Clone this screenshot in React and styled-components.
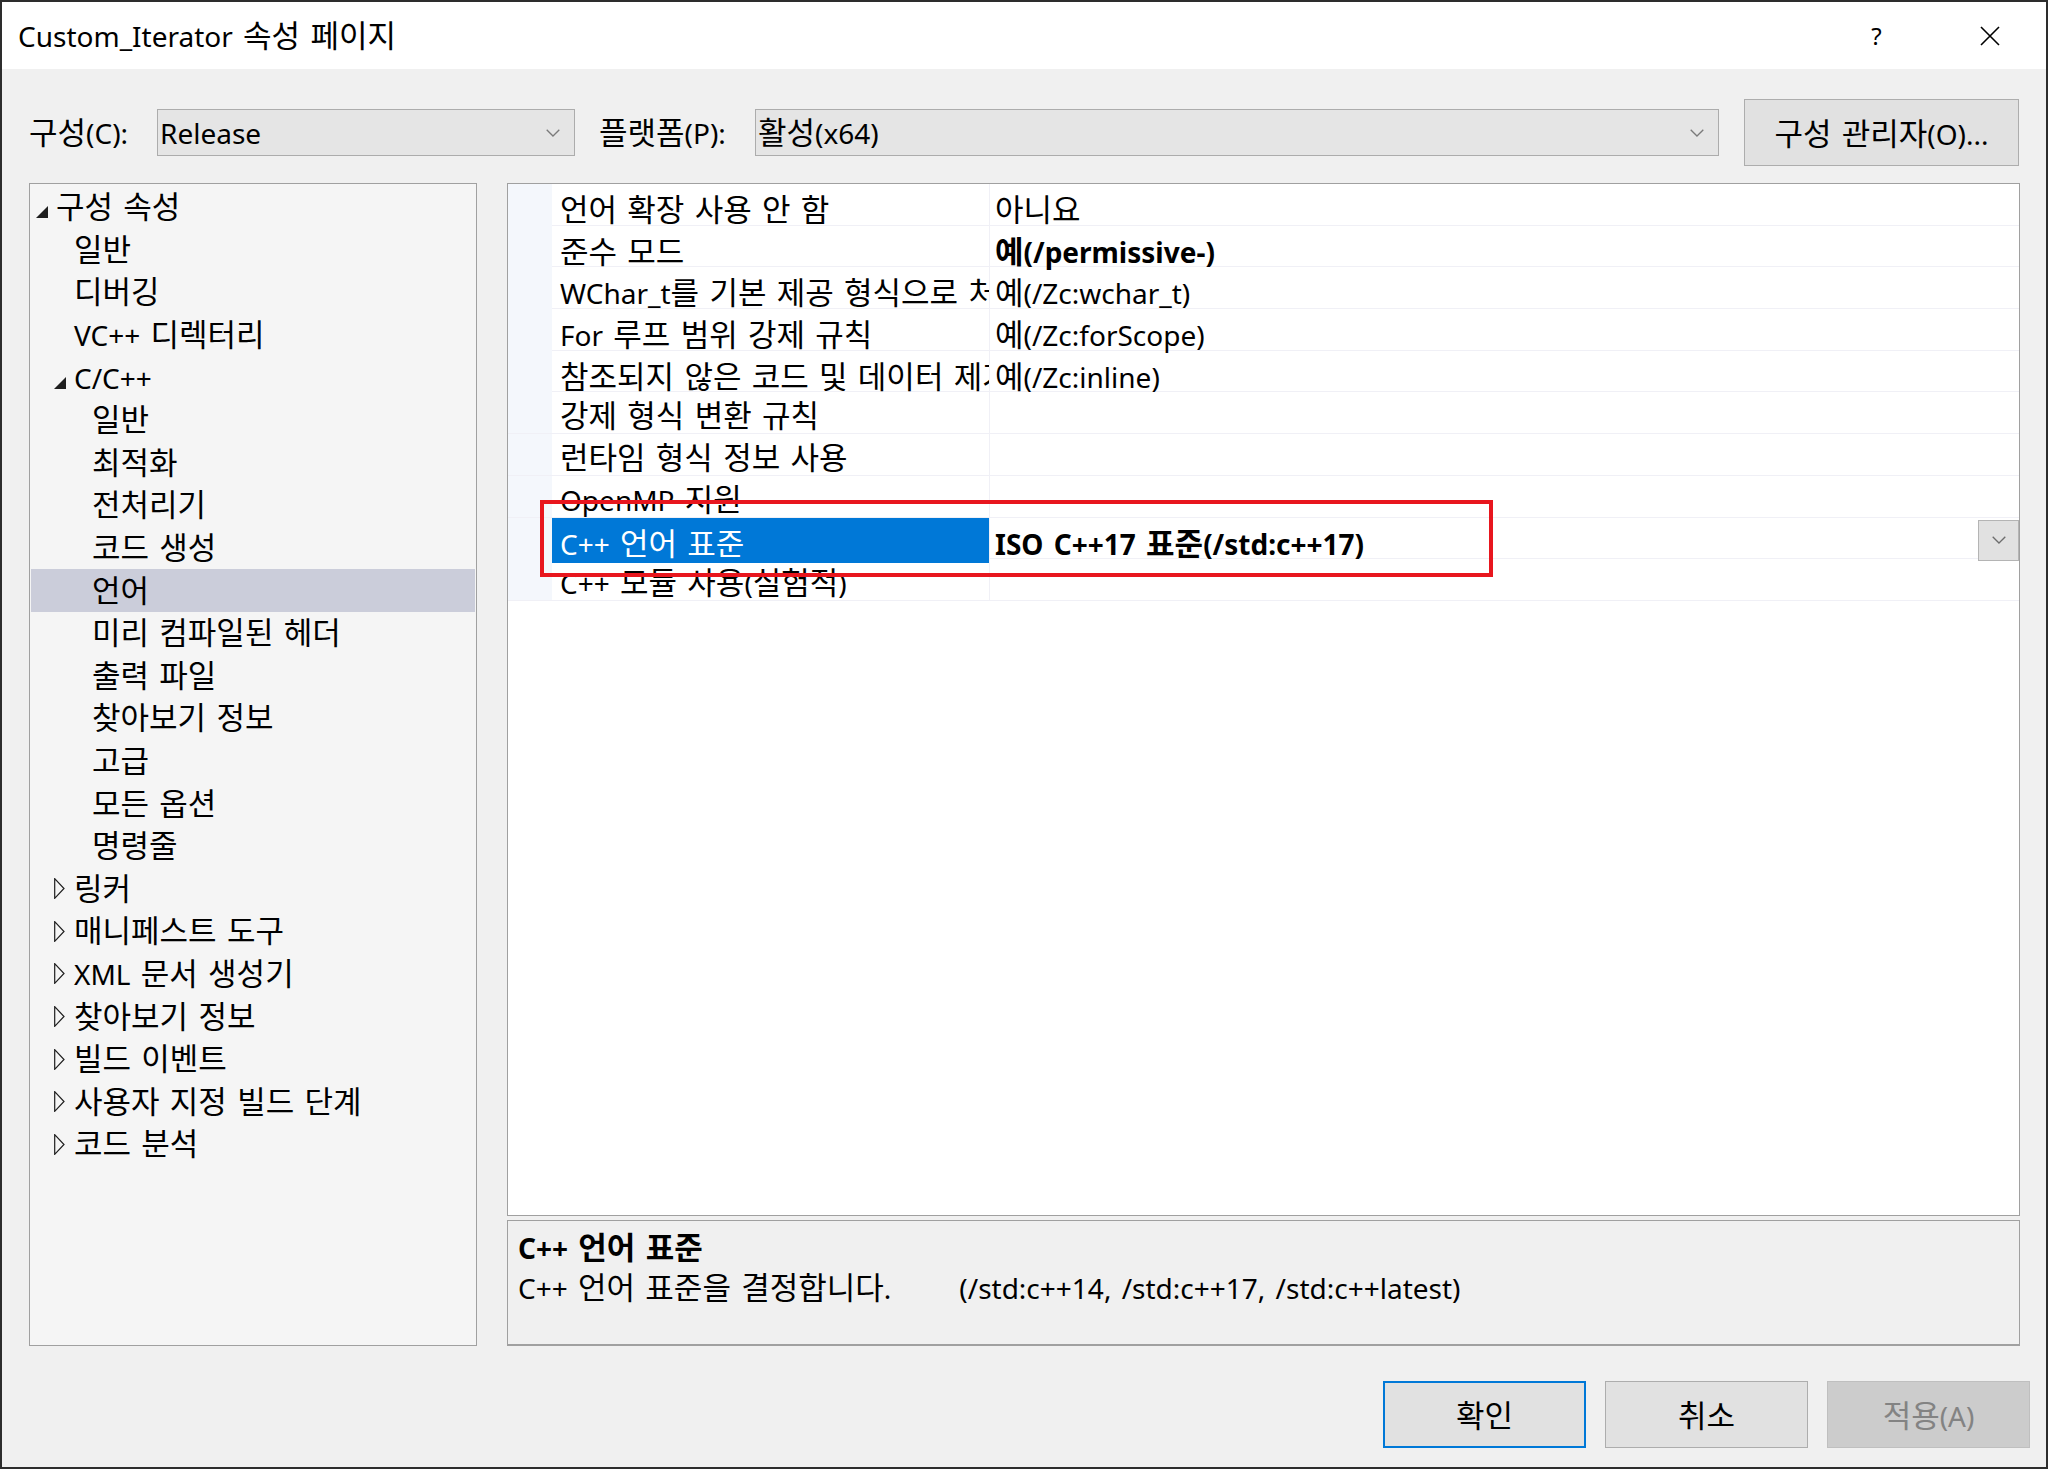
import React from "react";
import styled, { createGlobalStyle, css } from "styled-components";

const GlobalStyle = createGlobalStyle`
  html, body {
    margin: 0;
    padding: 0;
    background: #2d2d2d;
  }
  * {
    box-sizing: border-box;
  }
`;

const Window = styled.div`
  width: 2048px;
  height: 1469px;
  border: 2px solid #2d2d2d;
  background: #f0f0f0;
  display: flex;
  flex-direction: column;
  font-family: "Noto Sans", "Noto Sans CJK KR", sans-serif;
  font-size: 28px;
  word-spacing: 3px;
  color: #000;
  overflow: hidden;
`;

// Hangul runs are drawn a bit larger so they keep the width of the original font;
// line-height 0 keeps them from pushing the line box down
const Hangul = styled.span`
  font-size: 31px;
  line-height: 0;
`;

const HANGUL_RUN = /([\u1100-\u11ff\u3131-\u318e\uac00-\ud7a3]+)/;

const T = ({ children }) => (
  <span>
    {String(children)
      .split(HANGUL_RUN)
      .map((part, i) => (i % 2 === 1 ? <Hangul key={i}>{part}</Hangul> : part))}
  </span>
);

const TitleBar = styled.div`
  height: 67px;
  background: #fff;
  display: flex;
  align-items: center;
  padding-left: 16px;
`;

const Title = styled.div`
  flex: 1;
  white-space: nowrap;
`;

const CaptionButton = styled.div`
  width: 113px;
  height: 67px;
  display: flex;
  align-items: center;
  justify-content: center;
  font-size: 24px;
`;

const Toolbar = styled.div`
  display: flex;
  align-items: center;
  height: 67px;
  margin: 30px 27px 0 27px;
`;

const Label = styled.div`
  width: ${(p) => p.$w}px;
  margin-left: ${(p) => p.$ml || 0}px;
  white-space: nowrap;
`;

const Combo = styled.div`
  height: 47px;
  width: ${(p) => (p.$w ? `${p.$w}px` : "auto")};
  flex: ${(p) => (p.$w ? "none" : "1")};
  background: #e5e5e5;
  border: 1px solid #acacac;
  display: flex;
  align-items: center;
  padding: 0 14px 0 2px;
`;

const ComboText = styled.span`
  flex: 1;
`;

const Button = styled.div`
  width: ${(p) => p.$w}px;
  height: 67px;
  padding-top: 3px;
  background: ${(p) => (p.$disabled ? "#cccccc" : "#e1e1e1")};
  border: ${(p) => (p.$primary ? "2px solid #0078d7" : `1px solid ${p.$disabled ? "#bfbfbf" : "#adadad"}`)};
  color: ${(p) => (p.$disabled ? "#838383" : "#000")};
  display: flex;
  align-items: center;
  justify-content: center;
  margin-left: ${(p) => p.$ml || 0}px;
  white-space: nowrap;
`;

const Body = styled.div`
  display: flex;
  gap: 30px;
  height: 1163px;
  margin: 17px 26px 0 27px;
`;

const Tree = styled.div`
  width: 448px;
  background: #f5f5f5;
  border: 1px solid #a0a0a0;
  padding-top: 2px;
`;

const TreeRow = styled.div`
  height: 42.6px;
  display: flex;
  align-items: center;
  padding-left: ${(p) => 6 + p.$level * 18}px;
  white-space: nowrap;
  ${(p) =>
    p.$selected &&
    css`
      background: #cbcdda;
      margin: 0 1px;
      padding-left: ${5 + p.$level * 18}px;
    `}
`;

const Expander = styled.span`
  width: 20px;
  height: 42px;
  display: flex;
  align-items: ${(p) => (p.$open ? "flex-end" : "center")};
  padding-bottom: ${(p) => (p.$open ? 10 : 0)}px;
  flex: none;
`;

const RightColumn = styled.div`
  flex: 1;
  display: flex;
  flex-direction: column;
  gap: 4px;
`;

const Grid = styled.div`
  position: relative;
  flex: 1;
  background: #fff;
  border: 1px solid #a0a0a0;
`;

const GridRow = styled.div`
  display: grid;
  grid-template-columns: 44px 438px 1fr;
  height: 41.7px;
  border-bottom: 1px solid #f0f0f6;
`;

const Gutter = styled.div`
  background: #f4f7fc;
`;

const NameCell = styled.div`
  padding: 7px 0 0 8px;
  display: flex;
  align-items: center;
  overflow: hidden;
  white-space: nowrap;
  border-right: 1px solid #f0f0f6;
  ${(p) =>
    p.$selected &&
    css`
      background: #0078d7;
      color: #fff;
    `}
`;

const ValueCell = styled.div`
  padding: 7px 0 0 5px;
  display: flex;
  align-items: center;
  white-space: nowrap;
  font-weight: ${(p) => (p.$bold ? 700 : 400)};
`;

const DropButton = styled.div`
  margin: -7px 0 0 auto;
  width: 41px;
  height: 41px;
  background: #e1e1e1;
  border: 1px solid #b4b4b4;
  display: flex;
  align-items: center;
  justify-content: center;
`;

const RedMark = styled.div`
  position: absolute;
  left: 32px;
  top: 316px;
  width: 953px;
  height: 77px;
  border: 4px solid #e8161e;
  pointer-events: none;
`;

const Description = styled.div`
  height: 126px;
  background: #f0f0f0;
  border: 1px solid #a0a0a0;
  border-bottom: 2px solid #a0a0a0;
  padding: 7px 10px;
  line-height: 40px;
`;

const DescTitle = styled.div`
  font-weight: 700;
`;

const DescText = styled.div`
  white-space: nowrap;
`;

const DescFlags = styled.span`
  margin-left: 68px;
`;

const Footer = styled.div`
  display: flex;
  justify-content: flex-end;
  gap: 19px;
  margin: 35px 16px 0 0;
`;

const Chevron = ({ color = "#7a7a7a" }) => (
  <svg width="14" height="8" viewBox="0 0 14 8">
    <path d="M0.7 0.7 L7 7 L13.3 0.7" fill="none" stroke={color} strokeWidth="1.3" />
  </svg>
);

const OpenTriangle = () => (
  <svg width="12" height="12" viewBox="0 0 12 12">
    <path d="M12 0 L12 12 L0 12 Z" fill="#1e1e1e" />
  </svg>
);

const ClosedTriangle = () => (
  <svg width="11" height="21" viewBox="0 0 11 21">
    <path d="M0.7 0.7 L10 10.5 L0.7 20.3 Z" fill="none" stroke="#1e1e1e" strokeWidth="1.2" />
  </svg>
);

const CloseIcon = () => (
  <svg width="20" height="20" viewBox="0 0 20 20">
    <path d="M1 1 L19 19 M19 1 L1 19" stroke="#000" strokeWidth="1.6" />
  </svg>
);

const treeItems = [
  { label: "구성 속성", level: 0, node: "open" },
  { label: "일반", level: 1 },
  { label: "디버깅", level: 1 },
  { label: "VC++ 디렉터리", level: 1 },
  { label: "C/C++", level: 1, node: "open" },
  { label: "일반", level: 2 },
  { label: "최적화", level: 2 },
  { label: "전처리기", level: 2 },
  { label: "코드 생성", level: 2 },
  { label: "언어", level: 2, selected: true },
  { label: "미리 컴파일된 헤더", level: 2 },
  { label: "출력 파일", level: 2 },
  { label: "찾아보기 정보", level: 2 },
  { label: "고급", level: 2 },
  { label: "모든 옵션", level: 2 },
  { label: "명령줄", level: 2 },
  { label: "링커", level: 1, node: "closed" },
  { label: "매니페스트 도구", level: 1, node: "closed" },
  { label: "XML 문서 생성기", level: 1, node: "closed" },
  { label: "찾아보기 정보", level: 1, node: "closed" },
  { label: "빌드 이벤트", level: 1, node: "closed" },
  { label: "사용자 지정 빌드 단계", level: 1, node: "closed" },
  { label: "코드 분석", level: 1, node: "closed" },
];

const properties = [
  { name: "언어 확장 사용 안 함", value: "아니요" },
  { name: "준수 모드", value: "예(/permissive-)", bold: true },
  { name: "WChar_t를 기본 제공 형식으로 처리", value: "예(/Zc:wchar_t)" },
  { name: "For 루프 범위 강제 규칙", value: "예(/Zc:forScope)" },
  { name: "참조되지 않은 코드 및 데이터 제거", value: "예(/Zc:inline)" },
  { name: "강제 형식 변환 규칙", value: "" },
  { name: "런타임 형식 정보 사용", value: "" },
  { name: "OpenMP 지원", value: "" },
  { name: "C++ 언어 표준", value: "ISO C++17 표준(/std:c++17)", bold: true, selected: true },
  { name: "C++ 모듈 사용(실험적)", value: "" },
];

export default function App() {
  return (
    <>
      <GlobalStyle />
      <Window>
        <TitleBar>
          <Title><T>Custom_Iterator 속성 페이지</T></Title>
          <CaptionButton>?</CaptionButton>
          <CaptionButton>
            <CloseIcon />
          </CaptionButton>
        </TitleBar>

        <Toolbar>
          <Label $w={128}><T>구성(C):</T></Label>
          <Combo $w={418}>
            <ComboText>Release</ComboText>
            <Chevron />
          </Combo>
          <Label $w={156} $ml={24}><T>플랫폼(P):</T></Label>
          <Combo>
            <ComboText><T>활성(x64)</T></ComboText>
            <Chevron />
          </Combo>
          <Button $w={275} $ml={25}><T>구성 관리자(O)...</T></Button>
        </Toolbar>

        <Body>
          <Tree>
            {treeItems.map((item, i) => (
              <TreeRow key={i} $level={item.level} $selected={item.selected}>
                <Expander $open={item.node === "open"}>
                  {item.node === "open" && <OpenTriangle />}
                  {item.node === "closed" && <ClosedTriangle />}
                </Expander>
                <T>{item.label}</T>
              </TreeRow>
            ))}
          </Tree>

          <RightColumn>
            <Grid>
              {properties.map((prop, i) => (
                <GridRow key={i}>
                  <Gutter />
                  <NameCell $selected={prop.selected}>
                    <T>{prop.name}</T>
                  </NameCell>
                  <ValueCell $bold={prop.bold}>
                    <T>{prop.value}</T>
                    {prop.selected && (
                      <DropButton>
                        <Chevron color="#6d6d6d" />
                      </DropButton>
                    )}
                  </ValueCell>
                </GridRow>
              ))}
              <RedMark />
            </Grid>
            <Description>
              <DescTitle><T>C++ 언어 표준</T></DescTitle>
              <DescText>
                <T>C++ 언어 표준을 결정합니다.</T>
                <DescFlags>(/std:c++14, /std:c++17, /std:c++latest)</DescFlags>
              </DescText>
            </Description>
          </RightColumn>
        </Body>

        <Footer>
          <Button $w={203} $primary><T>확인</T></Button>
          <Button $w={203}><T>취소</T></Button>
          <Button $w={203} $disabled><T>적용(A)</T></Button>
        </Footer>
      </Window>
    </>
  );
}
